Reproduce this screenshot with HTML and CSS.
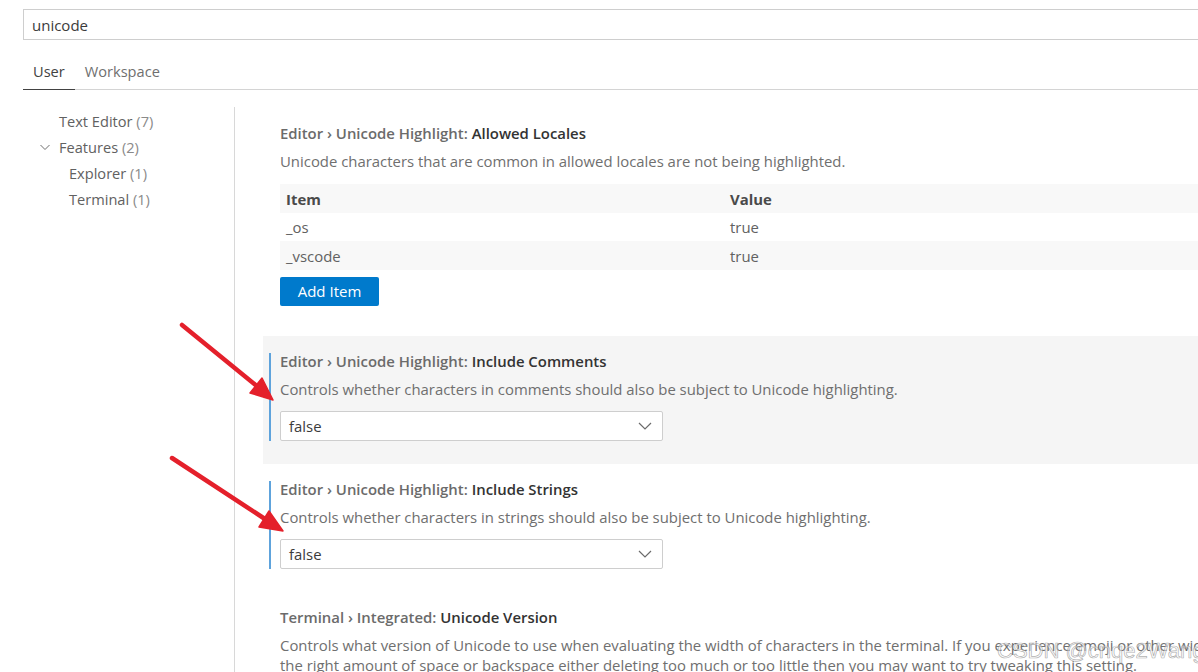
FILE: index.html
```html
<!DOCTYPE html>
<html>
<head>
<meta charset="utf-8">
<link rel="stylesheet" href="styles.css">
</head>
<body>
<div class="page">
  <div class="search"><span class="search-text">unicode</span></div>
  <div class="tabs">
    <div class="tab active">User</div>
    <div class="tab">Workspace</div>
  </div>
  <div class="body">
    <nav class="toc">
      <div class="toc-item lvl1"><span>Text Editor <span class="count">(7)</span></span></div>
      <div class="toc-item lvl1 open"><svg class="chev" width="12" height="12" viewBox="0 0 12 12"><path d="M1.5 4 L6 8.5 L10.5 4" fill="none" stroke="#6f6f6f" stroke-width="1"/></svg><span>Features <span class="count">(2)</span></span></div>
      <div class="toc-item lvl2"><span>Explorer <span class="count">(1)</span></span></div>
      <div class="toc-item lvl2"><span>Terminal <span class="count">(1)</span></span></div>
    </nav>
    <main class="settings">
      <section class="setting first">
        <div class="title"><span class="cat">Editor › Unicode Highlight: </span><span class="key">Allowed Locales</span></div>
        <div class="desc">Unicode characters that are common in allowed locales are not being highlighted.</div>
        <div class="table">
          <div class="row head"><div class="c1">Item</div><div class="c2">Value</div></div>
          <div class="row"><div class="c1">_os</div><div class="c2">true</div></div>
          <div class="row alt"><div class="c1">_vscode</div><div class="c2">true</div></div>
        </div>
        <div class="btn">Add Item</div>
      </section>
      <section class="setting focused mod">
        <div class="title"><span class="cat">Editor › Unicode Highlight: </span><span class="key">Include Comments</span></div>
        <div class="desc">Controls whether characters in comments should also be subject to Unicode highlighting.</div>
        <div class="select"><span>false</span>
          <svg width="14" height="10" viewBox="0 0 14 10"><path d="M1 2 L7 8 L13 2" fill="none" stroke="#6b6b6b" stroke-width="1.2"/></svg>
        </div>
      </section>
      <section class="setting mod">
        <div class="title"><span class="cat">Editor › Unicode Highlight: </span><span class="key">Include Strings</span></div>
        <div class="desc">Controls whether characters in strings should also be subject to Unicode highlighting.</div>
        <div class="select"><span>false</span>
          <svg width="14" height="10" viewBox="0 0 14 10"><path d="M1 2 L7 8 L13 2" fill="none" stroke="#6b6b6b" stroke-width="1.2"/></svg>
        </div>
      </section>
      <section class="setting">
        <div class="title"><span class="cat">Terminal › Integrated: </span><span class="key">Unicode Version</span></div>
        <div class="desc">Controls what version of Unicode to use when evaluating the width of characters in the terminal. If you experience emoji or other wide characters not taking up<br>the right amount of space or backspace either deleting too much or too little then you may want to try tweaking this setting.</div>
      </section>
    </main>
  </div>
  <svg class="arrows" width="1198" height="672" viewBox="0 0 1198 672">
    <g stroke="#e4202b" stroke-width="4.5" stroke-linecap="round" fill="#e4202b">
      <line x1="182" y1="325" x2="258" y2="387"/>
      <polygon points="273,400 250,393 262,378" stroke-width="1.5" stroke-linejoin="round"/>
      <line x1="172" y1="458" x2="268" y2="521"/>
      <polygon points="283,531 259,527 269,511" stroke-width="1.5" stroke-linejoin="round"/>
    </g>
  </svg>
  <div class="watermark">CSDN @cnqe2Wang</div>
</div>
</body>
</html>
```

FILE: styles.css
```css
html, body {
  margin: 0;
  padding: 0;
  overflow: hidden;
  background: #ffffff;
}
body {
  font-family: "Open Sans", "Noto Sans", sans-serif;
  font-size: 14.9px;
  color: #616161;
}
.page {
  position: relative;
  width: 1198px;
  height: 672px;
  overflow: hidden;
}
.search {
  margin: 9px 0 0 23px;
  width: 1200px;
  height: 29px;
  border: 1px solid #cecece;
  display: flex;
  align-items: center;
  padding-left: 8px;
}
.search-text {
  color: #3b3b3b;
  font-size: 15px;
}
.tabs {
  margin: 15px 0 0 23px;
  height: 34px;
  display: flex;
  border-bottom: 1px solid #d4d4d4;
}
.tab {
  padding: 0 10px;
  height: 34px;
  line-height: 33px;
  color: #6f6f6f;
  font-size: 14.6px;
  box-sizing: border-box;
}
.tab.active {
  color: #424242;
  border-bottom: 1px solid #424242;
  height: 35px;
}
.body {
  display: flex;
  padding-top: 17px;
}
.toc {
  width: 235px;
  flex: none;
  border-right: 1px solid #d8d8d8;
  height: 600px;
  box-sizing: border-box;
  padding-top: 1px;
}
.toc-item {
  height: 26px;
  line-height: 26px;
  display: flex;
  align-items: center;
  white-space: nowrap;
  color: #616161;
  font-size: 14.6px;
}
.toc-item.lvl1 { padding-left: 59px; }
.toc-item.lvl2 { padding-left: 69px; }
.toc-item.open { padding-left: 39px; }
.chev { margin-right: 8px; flex: none; }
.count { color: #8a8a8a; }
.settings {
  flex: 1;
  padding-left: 28px;
  min-width: 0;
}
.setting {
  position: relative;
  padding: 15px 0 23px 17px;
  width: 980px;
}
.setting.first {
  padding-top: 16px;
  padding-bottom: 30px;
}
.setting.focused { background: #f5f5f5; }
.setting.mod::before {
  content: "";
  position: absolute;
  left: 6px;
  top: 17px;
  bottom: 23px;
  width: 2px;
  background: #5ea3dc;
}
.title {
  line-height: 20px;
  font-weight: 600;
  white-space: nowrap;
}
.title .cat { color: #6b6b6b; }
.title .key { color: #333333; }
.desc {
  margin-top: 8px;
  line-height: 20px;
  color: #6f6f6f;
  white-space: nowrap;
}
.table {
  margin-top: 13px;
  width: 940px;
}
.row {
  display: flex;
  height: 28px;
  align-items: center;
  color: #616161;
}
.row.head {
  height: 29px;
  background: #f8f8f8;
  font-weight: 700;
  color: #4a4a4a;
}
.row.alt {
  height: 29px;
  background: #f8f8f8;
}
.c1 {
  width: 444px;
  box-sizing: border-box;
  padding-left: 6px;
}
.c2 {
  padding-left: 6px;
}
.btn {
  margin-top: 7px;
  width: 99px;
  height: 29px;
  line-height: 29px;
  text-align: center;
  background: #007acc;
  color: #ffffff;
  border-radius: 2px;
  font-size: 15px;
}
.select {
  margin-top: 12px;
  width: 383px;
  height: 30px;
  box-sizing: border-box;
  border: 1px solid #cecece;
  border-radius: 2px;
  background: #ffffff;
  display: flex;
  align-items: center;
  justify-content: space-between;
  padding: 0 10px 0 8px;
  color: #3b3b3b;
}
.arrows {
  position: absolute;
  left: 0;
  top: 0;
  pointer-events: none;
}
.watermark {
  position: absolute;
  left: 997px;
  top: 638px;
  font-family: "Liberation Sans", sans-serif;
  font-size: 22px;
  color: rgba(255, 255, 255, 0.55);
  -webkit-text-stroke: 0.7px rgba(140, 140, 140, 0.7);
  white-space: nowrap;
}
```
